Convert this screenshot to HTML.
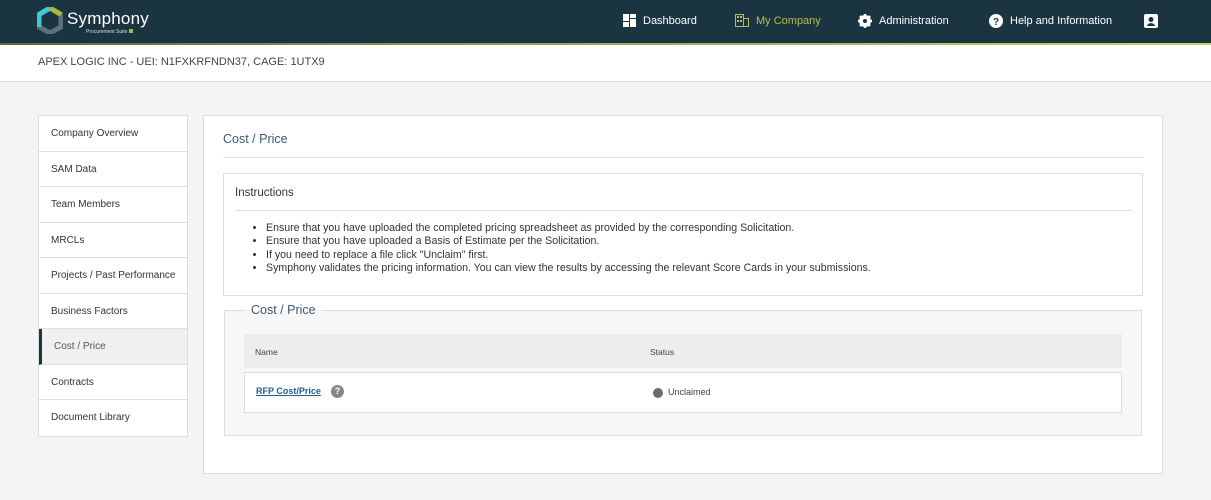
<!DOCTYPE html>
<html><head><style>
*{box-sizing:border-box;margin:0;padding:0}
body{width:1211px;height:500px;background:#f4f4f4;font-family:"Liberation Sans",sans-serif;position:relative;overflow:hidden;color:#333}
.hdr{position:absolute;left:0;top:0;width:1211px;height:43px;background:#1b3441}
.grad{position:absolute;left:0;top:43px;width:1211px;height:2px;background:linear-gradient(90deg,#5a6a3a,#9aa860 50%,#c8d06a)}
.sub{position:absolute;left:0;top:45px;width:1211px;height:37px;background:#fff;border-bottom:1px solid #ddd}
.sub span{position:absolute;left:38px;top:11px;font-size:11px;color:#444}
.nav{position:absolute;top:14px;font-size:11px;color:#fff;display:flex;align-items:center;gap:7px}
.side{position:absolute;left:38px;top:115px;width:150px;background:#fff;border:1px solid #ddd}
.side div{height:35.5px;border-bottom:1px solid #ddd;font-size:10px;padding-left:12px;line-height:35px;color:#333}
.side div:last-child{border-bottom:none}
.side .act{background:#f0f0f0;border-left:3px solid #1b3441;padding-left:12px;color:#555}
.main{position:absolute;left:203px;top:115px;width:960px;height:359px;background:#fff;border:1px solid #ddd}
</style></head><body>
<div class="hdr">
<svg style="position:absolute;left:37px;top:7px" width="26" height="27" viewBox="0 0 26 27"><path d="M13 1L24 7.5V20L13 26L2 20V7.5Z" fill="none" stroke="#5f6f78" stroke-width="5"/><path d="M13 1L2 7.5V20" fill="none" stroke="#3fc9d4" stroke-width="5"/><path d="M13 1L24 7.5" fill="none" stroke="#a9b83f" stroke-width="5"/></svg>
<div style="position:absolute;left:67px;top:9px;font-size:17px;color:#fff;letter-spacing:0.2px">Symphony</div>
<div style="position:absolute;left:86px;top:29px;font-size:5px;color:#ddd">Procurement Suite <span style="display:inline-block;width:4px;height:4px;background:#a9b83f"></span></div>
<div class="nav" style="left:623px"><svg width="13" height="13"><rect x="0" y="0" width="6" height="7" fill="#fff"/><rect x="7" y="0" width="6" height="4" fill="#fff"/><rect x="0" y="8" width="6" height="5" fill="#fff"/><rect x="7" y="5" width="6" height="8" fill="#fff"/></svg>Dashboard</div>
<div class="nav" style="left:735px;color:#b5c04a"><svg width="14" height="13"><rect x="0.5" y="0.5" width="8" height="12" fill="none" stroke="#b5c04a"/><rect x="8.5" y="4.5" width="5" height="8" fill="none" stroke="#b5c04a"/><rect x="2" y="2" width="2" height="2" fill="#b5c04a"/><rect x="5" y="2" width="2" height="2" fill="#b5c04a"/><rect x="2" y="6" width="2" height="2" fill="#b5c04a"/><rect x="5" y="6" width="2" height="2" fill="#b5c04a"/></svg>My Company</div>
<div class="nav" style="left:858px"><svg width="14" height="14" viewBox="0 0 14 14"><circle cx="7" cy="7" r="4.5" fill="none" stroke="#fff" stroke-width="3"/><g stroke="#fff" stroke-width="2.5"><path d="M7 0V14M0 7H14M2 2L12 12M12 2L2 12"/></g><circle cx="7" cy="7" r="2" fill="#1b3441"/></svg>Administration</div>
<div class="nav" style="left:989px"><svg width="14" height="14"><circle cx="7" cy="7" r="7" fill="#fff"/><text x="7" y="11" font-size="10" font-weight="bold" text-anchor="middle" fill="#1b3441" font-family="Liberation Sans">?</text></svg>Help and Information</div>
<svg style="position:absolute;left:1144px;top:14px" width="14" height="14"><rect width="14" height="14" rx="2" fill="#fff"/><circle cx="7" cy="5.5" r="2.5" fill="#1b3441"/><path d="M2.5 12Q7 6 11.5 12Z" fill="#1b3441"/></svg>
</div>
<div class="grad"></div>
<div class="sub"><span>APEX LOGIC INC - UEI: N1FXKRFNDN37, CAGE: 1UTX9</span></div>
<div class="side">
<div>Company Overview</div><div>SAM Data</div><div>Team Members</div><div>MRCLs</div><div>Projects / Past Performance</div><div>Business Factors</div><div class="act">Cost / Price</div><div>Contracts</div><div>Document Library</div>
</div>
<div class="main">
<div style="position:absolute;left:19px;top:16px;font-size:12.5px;color:#3a5a70">Cost / Price</div>
<div style="position:absolute;left:19px;top:41px;width:920px;border-top:1px solid #ddd"></div>
<div style="position:absolute;left:19px;top:57px;width:920px;height:123px;border:1px solid #ddd">
<div style="position:absolute;left:11px;top:13px;font-size:11.5px;color:#333">Instructions</div>
<div style="position:absolute;left:11px;top:36px;width:896px;border-top:1px solid #ddd"></div>
<ul style="position:absolute;left:42px;top:48px;font-size:10.6px;line-height:13.3px;color:#333;white-space:nowrap">
<li>Ensure that you have uploaded the completed pricing spreadsheet as provided by the corresponding Solicitation.</li>
<li>Ensure that you have uploaded a Basis of Estimate per the Solicitation.</li>
<li>If you need to replace a file click "Unclaim" first.</li>
<li>Symphony validates the pricing information. You can view the results by accessing the relevant Score Cards in your submissions.</li></ul>
</div>
<div style="position:absolute;left:20px;top:194px;width:918px;height:126px;background:#f7f7f7;border:1px solid #ddd">
<div style="position:absolute;left:20px;top:-8px;padding:0 6px;font-size:12.5px;color:#3a5a70;background:linear-gradient(#fff 50%,#f7f7f7 50%)">Cost / Price</div>
<div style="position:absolute;left:19px;top:23px;width:878px;height:34px;background:#ecedec;font-size:8.5px;color:#444">
<span style="position:absolute;left:11px;top:13px">Name</span><span style="position:absolute;left:406px;top:13px">Status</span></div>
<div style="position:absolute;left:19px;top:61px;width:878px;height:41px;background:#fff;border:1px solid #ddd;font-size:9px">
<span style="position:absolute;left:11px;top:13px;color:#1f5f8f;font-weight:bold;text-decoration:underline">RFP Cost/Price</span>
<span style="position:absolute;left:86px;top:12px;width:13px;height:13px;border-radius:50%;background:#888;color:#fff;font-weight:bold;font-size:9px;text-align:center;line-height:13px">?</span>
<span style="position:absolute;left:408px;top:15px;width:10px;height:10px;border-radius:50%;background:#6b6b6b"></span>
<span style="position:absolute;left:423px;top:14px;color:#444">Unclaimed</span></div>
</div>
</div>
</body></html>
